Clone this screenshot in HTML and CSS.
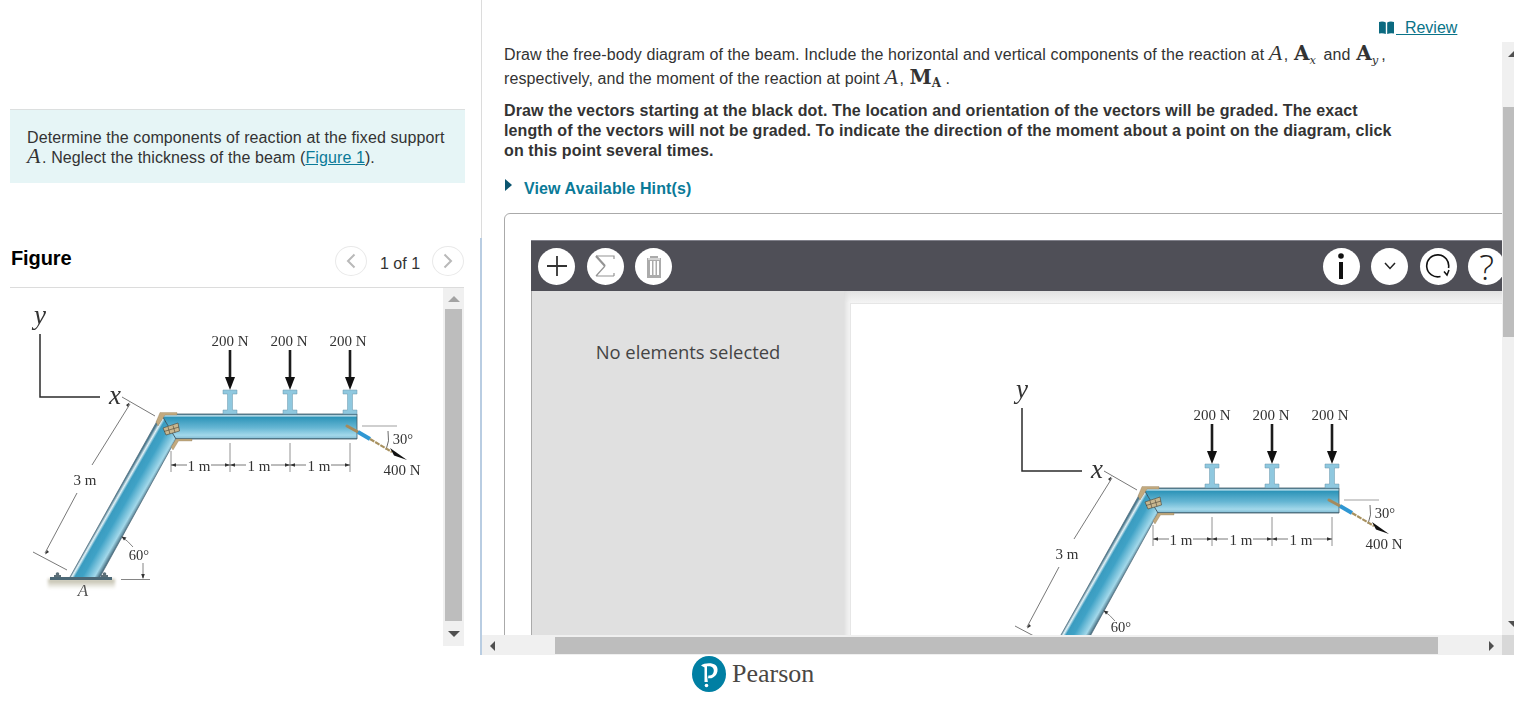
FILE: index.html
```html
<!DOCTYPE html>
<html lang="en">
<head>
<meta charset="utf-8">
<title>Free-body diagram</title>
<link rel="stylesheet" href="styles.css">
</head>
<body>
<div class="app">
  <div class="left">
    <div class="left-top">
      <div class="intro">Determine the components of reaction at the fixed support <span class="m-i">A</span>. Neglect the thickness of the beam (<a class="link" href="#">Figure 1</a>).</div>
    </div>
    <div class="left-bottom">
      <div class="fig-head">
        <div class="fig-title">Figure</div>
        <div class="pager">
          <span class="page-btn"><svg width="10" height="16" viewBox="0 0 10 16"><path d="M8.5 1.5L2 8l6.5 6.5" class="chev"/></svg></span>
          <span class="page-num">1 of 1</span>
          <span class="page-btn"><svg width="10" height="16" viewBox="0 0 10 16"><path d="M1.5 1.5L8 8l-6.5 6.5" class="chev"/></svg></span>
        </div>
      </div>
      <div class="fig-body">
        <div class="fig-view">
          <svg class="beam" width="400" height="300" viewBox="25 300 400 300">
            <defs>
              <linearGradient id="gH" x1="0" y1="0" x2="0" y2="1">
                <stop offset="0" stop-color="#3a6f88"/>
                <stop offset=".07" stop-color="#bfe2ee"/>
                <stop offset=".14" stop-color="#2f95b9"/>
                <stop offset=".55" stop-color="#66b6d3"/>
                <stop offset=".85" stop-color="#a3d8ea"/>
                <stop offset=".95" stop-color="#8cc4da"/>
                <stop offset="1" stop-color="#3a5f72"/>
              </linearGradient>
              <linearGradient id="gC" gradientUnits="userSpaceOnUse" x1="116" y1="495" x2="138.6" y2="508">
                <stop offset="0" stop-color="#4b7a90"/>
                <stop offset=".1" stop-color="#e4f3f8"/>
                <stop offset=".2" stop-color="#3b9cc0"/>
                <stop offset=".45" stop-color="#3fa2c6"/>
                <stop offset=".85" stop-color="#a2d8ea"/>
                <stop offset="1" stop-color="#4f7688"/>
              </linearGradient>
              <linearGradient id="gG" x1="0" y1="0" x2="0" y2="1">
                <stop offset="0" stop-color="#b9b6a0"/>
                <stop offset="1" stop-color="#ffffff"/>
              </linearGradient>
              <filter id="soft" x="-10%" y="-30%" width="120%" height="160%"><feGaussianBlur stdDeviation="1.6"/></filter>
              <g id="load">
                <rect x="-1.3" y="350" width="2.6" height="30" fill="#1c1c1c"/>
                <path d="M-5 377H5L0 390Z" fill="#111"/>
                <path d="M-7 390H7V394H2.5V410H7V414H-7V410H-2.5V394H-7Z" fill="#8fc8df" stroke="#6a96aa" stroke-width=".5"/>
              </g>
              <symbol id="beam-art" viewBox="25 300 400 300">
                <path d="M40 334V397H100" fill="none" stroke="#2b2b2b" stroke-width="1.5"/>
                <rect x="48" y="579" width="67" height="10" fill="url(#gG)" filter="url(#soft)"/>
                <path d="M122 397L155 416M33 552L67 570M130 404L92 465M77 493L45 553" fill="none" stroke="#555" stroke-width=".8"/>
                <path d="M128 407l1.5-4.5-3.5 2.5ZM47 550l-2 4.500 4-2.500Z" fill="#333"/>
                <path d="M70 577L161 414L176 439L100 577Z" fill="url(#gC)"/>
                <path d="M70 577L161 414M100 577L176 439" fill="none" stroke="#4a6675" stroke-width=".7"/>
                <path d="M161 414H357V439H176Z" fill="url(#gH)"/>
                <path d="M161 414H357V439H176" fill="none" stroke="#3f5a68" stroke-width=".8"/>
                <path d="M161 414L176 439" stroke="#27404c" stroke-width=".8"/>
                <path d="M160 412.500H177V415H165L158 426L156 422Z" fill="#c2a97e" stroke="#8a7350" stroke-width=".3"/>
                <path d="M176 439H192V441H178.500L173 450L171 447Z" fill="#c2a97e" stroke="#8a7350" stroke-width=".3"/>
                <path d="M163 428L178 423L179.500 431L166 435Z" fill="#c8b78f" stroke="#4a4336" stroke-width=".6"/>
                <path d="M168 427L170 434M173 425.500L175 432.500M164 431.500L179 427" stroke="#4a4336" stroke-width=".6" fill="none"/>
                <use href="#load" x="230"/>
                <use href="#load" x="290"/>
                <use href="#load" x="350"/>
                <path d="M50 580H112V577H50Z" fill="#4c6876"/>
                <path d="M54 577h7v-2h-7ZM101 577h7v-2h-7Z" fill="#5c6f78"/>
                <circle cx="57.500" cy="574" r="1.800" fill="#5c6f78"/>
                <circle cx="104.500" cy="574" r="1.800" fill="#5c6f78"/>
                <path d="M171 451V472M230 443V472M290 443V472M350 443V472" stroke="#777" stroke-width=".8" fill="none"/>
                <path d="M171 465H187M211 465H230M230 465H246M271 465H290M290 465H306M331 465H350" stroke="#555" stroke-width=".8" fill="none"/>
                <path d="M171 465l5-1.800v3.600ZM230 465l-5-1.800v3.600ZM230 465l5-1.800v3.600ZM290 465l-5-1.800v3.600ZM290 465l5-1.800v3.600ZM350 465l-5-1.800v3.600Z" fill="#333"/>
                <path d="M362 426H397" stroke="#777" stroke-width=".7"/>
                <path d="M388 431Q390 441 386 450" fill="none" stroke="#444" stroke-width=".8"/>
                <path d="M122 537Q128 541 133 547M143 563V578M121 579.500H150" fill="none" stroke="#666" stroke-width=".8"/>
                <path d="M121.500 536.500l5 1-2.500 3ZM143 579l-1.800-5h3.600Z" fill="#333"/>
                <path d="M347 426L358 432" stroke="#a58a5c" stroke-width="3" stroke-linecap="round"/>
                <path d="M358 432L370 439" stroke="#2f97d3" stroke-width="4"/>
                <path d="M370 439L392 452" stroke="#a8915f" stroke-width="2.200" stroke-dasharray="5 1"/>
                <path d="M407 460L394 455.500L390 448Z" fill="#111"/>
              </symbol>
            </defs>
            <use href="#beam-art" x="25" y="300" width="400" height="300"/>
            <text class="t-ax" x="40" y="324">y</text>
            <text class="t-ax" x="115" y="404">x</text>
            <text class="t-l" x="230" y="346">200 N</text>
            <text class="t-l" x="289" y="346">200 N</text>
            <text class="t-l" x="348" y="346">200 N</text>
            <text class="t-l" x="199" y="471">1 m</text>
            <text class="t-l" x="259" y="471">1 m</text>
            <text class="t-l" x="319" y="471">1 m</text>
            <text class="t-l" x="85" y="485">3 m</text>
            <text class="t-l" x="402" y="475">400 N</text>
            <text class="t-s" x="403" y="444">30°</text>
            <text class="t-s" x="139" y="560">60°</text>
            <text class="t-a" x="83" y="596">A</text>
          </svg>
        </div>
        <div class="vbar">
          <div class="vbar-end vbar-top"><i class="tri tri-up"></i></div>
          <div class="vbar-thumb"></div>
          <div class="vbar-end"><i class="tri tri-down"></i></div>
        </div>
      </div>
    </div>
  </div>

  <div class="right">
    <div class="review-row">
      <svg class="book" width="15" height="13" viewBox="0 0 15 13"><path d="M0 1Q4 0 6.800 1.500V13Q4 11.800 0 12.500ZM15 1Q11 0 8.200 1.500V13Q11 11.800 15 12.500Z" fill="#0b6a80"/></svg>
      <a class="review" href="#">&nbsp;&nbsp;Review</a>
    </div>
    <div class="scroll-grid">
      <div class="scroller">
        <p class="lead">Draw the free-body diagram of the beam. Include the horizontal and vertical components of the reaction at <span class="m-i">A</span>, <span class="m-b">A</span><sub class="m-sub">x</sub> and <span class="m-b">A</span><sub class="m-sub">y</sub>,<br>respectively, and the moment of the reaction at point <span class="m-i">A</span>, <span class="m-b">M</span><sub class="m-subb">A</sub> .</p>
        <p class="strong">Draw the vectors starting at the black dot. The location and orientation of the vectors will be graded. The exact<br>length of the vectors will not be graded. To indicate the direction of the moment about a point on the diagram, click<br>on this point several times.</p>
        <div class="hint"><i class="hint-tri"></i><a class="hint-link" href="#">View Available Hint(s)</a></div>
        <div class="tool-box">
          <div class="toolbar">
            <span class="tool"><svg width="22" height="22" viewBox="0 0 22 22"><path d="M11 1V21M1 11H21" stroke="#333" stroke-width="1.800" fill="none"/></svg></span>
            <span class="tool"><svg width="24" height="24" viewBox="0 0 24 24"><path d="M3 2H21V5M21 22V19M3 22H21M3 22L12 12" stroke="#949494" stroke-width="1.200" fill="none"/><path d="M3 2L12 12" stroke="#949494" stroke-width="2.200" fill="none"/></svg></span>
            <span class="tool"><svg class="trash" width="16" height="24" viewBox="0 0 16 24"><path d="M4 3V1H12V3H15V23H1V3Z" fill="#ababab"/><path d="M4 6H6V20H4ZM7.500 6H9.500V20H7.500ZM11 6H13V20H11ZM2 3.500H14V4.500H2Z" fill="#ffffff"/></svg></span>
            <span class="tool-gap"></span>
            <span class="tool"><svg width="8" height="26" viewBox="0 0 8 26"><circle cx="4" cy="3" r="2.800" fill="#111"/><rect x="2" y="9" width="4" height="17" fill="#111"/></svg></span>
            <span class="tool"><svg width="12" height="8" viewBox="0 0 12 8"><path d="M1 1L6 6.500L11 1" stroke="#222" stroke-width="1.500" fill="none"/></svg></span>
            <span class="tool"><svg width="26" height="26" viewBox="0 0 26 26"><path d="M15.500 23.500A11 11 0 1 1 23.500 15" stroke="#111" stroke-width="1.600" fill="none"/><path d="M19 18.500L22 22L24 17" stroke="#111" stroke-width="1.500" fill="none"/></svg></span>
            <span class="tool tool-q">?</span>
          </div>
          <div class="work">
            <div class="side">No elements selected</div>
            <div class="canvas-wrap">
              <div class="canvas">
                <svg class="beam beam-big" width="400" height="300" viewBox="25 300 400 300">
                  <use href="#beam-art" x="25" y="300" width="400" height="300"/>
                  <text class="t-ax" x="40" y="324">y</text>
                  <text class="t-ax" x="115" y="404">x</text>
                  <text class="t-l" x="230" y="346">200 N</text>
                  <text class="t-l" x="289" y="346">200 N</text>
                  <text class="t-l" x="348" y="346">200 N</text>
                  <text class="t-l" x="199" y="471">1 m</text>
                  <text class="t-l" x="259" y="471">1 m</text>
                  <text class="t-l" x="319" y="471">1 m</text>
                  <text class="t-l" x="85" y="485">3 m</text>
                  <text class="t-l" x="402" y="475">400 N</text>
                  <text class="t-s" x="403" y="444">30°</text>
                  <text class="t-s" x="139" y="558">60°</text>
                </svg>
              </div>
            </div>
          </div>
        </div>
      </div>
      <div class="mainbar">
        <div class="mainbar-end mainbar-top"><i class="tri tri-up-dark tri-clip"></i></div>
        <div class="mainbar-thumb"></div>
        <div class="mainbar-end mainbar-bottom"><i class="tri tri-down tri-clip"></i></div>
      </div>
      <div class="hbar">
        <div class="hbar-start"><i class="tri tri-left"></i></div>
        <div class="hbar-thumb"></div>
        <div class="hbar-end"><i class="tri tri-right"></i></div>
      </div>
      <div class="corner"></div>
    </div>
    <div class="footer">
      <svg width="34" height="36" viewBox="0 0 34 36"><ellipse cx="17" cy="18" rx="17" ry="18" fill="#007fa3"/><path d="M9 9.500C12 7 20 6.500 23.500 9C27 12 26 19 21 21.500C19.500 22.300 18 22.500 16 22.200L16.400 19.500C19 20 21.500 18.500 21.800 15C22 11.500 19.500 9.800 15 10.300L15 19L15.800 26H12.500L12.500 11.500Z" fill="#fff"/><circle cx="14.500" cy="29.500" r="1.800" fill="#fff"/></svg>
      <span class="brand">Pearson</span>
    </div>
  </div>
</div>
</body>
</html>
```
FILE: styles.css
```css
* { box-sizing: border-box; }
html, body { margin: 0; padding: 0; background: #fff; }
body { font: 16px/20px "Liberation Sans", Arial, sans-serif; color: #333; overflow: hidden; letter-spacing: .1px; }
p { margin: 0; }
a { color: #0a7a98; }
i { display: block; }

.app { display: flex; width: 1527px; height: 706px; overflow: hidden; }

/* left column */
.left { width: 482px; flex: none; display: flex; flex-direction: column; }
.left-top { height: 238px; padding: 109px 0 0 10px; border-right: 1px solid #dcdcdc; }
.intro { width: 455px; height: 74px; padding: 18px 16px 0 17px; background: #e6f5f6; border-top: 1px solid #dcdfdf; }
.left-bottom { height: 417px; padding-left: 10px; padding-right: 16px; border-right: 2px solid #b9cde2; }
.fig-head { display: flex; justify-content: space-between; align-items: flex-start; height: 50px; padding-top: 8px; width: 454px; border-bottom: 1px solid #dcdcdc; }
.fig-title { font-size: 20px; line-height: 24px; font-weight: 700; color: #000; margin-left: 1px; letter-spacing: -.1px; }
.pager { display: flex; align-items: flex-start; gap: 13px; }
.page-btn { width: 32px; height: 30px; border: 1px solid #e9e9e9; border-radius: 50%; display: flex; align-items: center; justify-content: center; }
.chev { fill: none; stroke: #b9b9b9; stroke-width: 2; }
.page-num { margin-top: 8px; width: 39px; white-space: nowrap; letter-spacing: 0; }
.fig-body { display: flex; height: 358px; }
.fig-view { width: 433px; padding: 12px 0 0 15px; overflow: hidden; }
.beam { display: block; filter: blur(.35px); letter-spacing: 0; }
.t-ax { font: italic 27px "Liberation Serif", serif; fill: #333; text-anchor: middle; }
.t-l { font: 15px "Liberation Serif", serif; fill: #333; text-anchor: middle; }
.t-s { font: 14.500px "Liberation Serif", serif; fill: #333; text-anchor: middle; }
.t-a { font: italic 17px "Liberation Serif", serif; fill: #555; text-anchor: middle; }

.vbar { width: 21px; background: #f0f0f0; display: flex; flex-direction: column; align-items: center; }
.vbar-end { flex: 1; width: 100%; display: flex; align-items: center; justify-content: center; }
.vbar-top { flex: none; height: 21px; }
.vbar-thumb { width: 17px; height: 312px; flex: none; background: #bdbdbd; }

.tri { width: 0; height: 0; border-style: solid; border-color: transparent; }
.tri-up { border-width: 0 6px 6px; border-bottom-color: #a3a3a3; }
.tri-up-dark { border-width: 0 6px 6px; border-bottom-color: #505050; }
.tri-down { border-width: 6px 6px 0; border-top-color: #505050; }
.tri-left { border-width: 5px 5px 5px 0; border-right-color: #505050; }
.tri-right { border-width: 5px 0 5px 5px; border-left-color: #505050; }

/* right column */
.right { width: 1032px; flex: none; display: flex; flex-direction: column; }
.review-row { height: 42px; display: flex; align-items: flex-start; padding: 18px 0 0 897px; }
.book { margin-top: 3px; flex: none; }
.review { white-space: nowrap; color: #0a7388; margin-left: 2px; letter-spacing: 0; }
.scroll-grid { display: grid; grid-template-columns: 1020px 12px; grid-template-rows: 593px 20px; }
.scroller { overflow: hidden; padding: 1px 0 0 22px; }
.lead { line-height: 24px; white-space: nowrap; }
.strong { font-weight: 700; margin-top: 10px; white-space: nowrap; letter-spacing: .12px; }
.m-i { font: italic 22px/16px "Liberation Serif", serif; margin-right: 1.500px; }
.m-b { font: 700 20px/16px "DejaVu Serif", serif; margin-left: 1px; letter-spacing: 0; }
.m-sub { font: italic 11.500px/10px "DejaVu Serif", serif; vertical-align: -4px; margin-right: 3px; }
.m-subb { font: 700 12px/10px "DejaVu Serif", serif; vertical-align: -3px; letter-spacing: 0; }
.hint { display: flex; align-items: flex-start; margin-top: 18px; height: 20px; }
.hint-tri { border-style: solid; border-width: 6.500px 0 6.500px 7px; border-color: transparent transparent transparent #0b5570; width: 0; height: 0; margin: 0 0 0 1px; }
.hint-link { margin-left: 12px; font-weight: 700; text-decoration: none; color: #0a7a98; letter-spacing: .12px; }
.tool-box { margin-top: 14px; width: 1100px; height: 500px; padding: 26px 0 0 26px; border: 1px solid #aaa; border-radius: 6px 0 0 0; }
.toolbar { width: 980px; height: 51px; background: #4f4f57; border-top: 1px solid #80808a; display: flex; align-items: center; padding: 0 6px 0 7px; gap: 11.500px; }
.tool { width: 37px; height: 37px; flex: none; background: #fff; border-radius: 50%; display: flex; align-items: center; justify-content: center; }
.trash { margin-top: 1px; }
.tool-gap { flex: 1; }
.tool-q { font: 300 35px/37px "Open Sans", sans-serif; color: #222; letter-spacing: 0; }
.work { width: 980px; height: 400px; display: flex; border-left: 1px solid #aaa; background: #f2f2f2; }
.side { width: 312px; flex: none; background: #e0e0e0; padding-top: 49px; text-align: center; font: 18.400px/24px "Open Sans", sans-serif; color: #444; letter-spacing: 0; }
.canvas-wrap { flex: 1; padding: 12px 0 0 6px; background: linear-gradient(#e2e2e2, #f4f4f4 12px); box-shadow: inset 5px 0 5px -3px #dcdcdc; }
.canvas { height: 100%; background: #fff; border-top: 1px solid #e6e6e6; border-left: 1px solid #e6e6e6; padding: 70px 0 0 156px; }

.mainbar { background: #f0f0f0; display: flex; flex-direction: column; overflow: hidden; }
.mainbar-end { display: flex; justify-content: flex-end; }
.mainbar-top { height: 65px; padding-top: 9px; }
.mainbar-bottom { flex: 1; padding-top: 284px; }
.mainbar-thumb { height: 230px; margin-left: 1px; flex: none; background: #bdbdbd; }
.tri-clip { margin-right: -6px; }

.hbar { background: #f0f0f0; display: flex; align-items: center; padding-top: 1px; }
.hbar-start { width: 73px; padding-left: 8px; flex: none; }
.hbar-thumb { width: 883px; height: 17px; flex: none; background: #bdbdbd; }
.hbar-end { flex: 1; padding-left: 51px; }
.corner { background: #d8d8d8; }

.footer { height: 51px; display: flex; align-items: flex-start; padding: 1px 0 0 210px; gap: 6px; }
.brand { font: 26px/36px "Liberation Serif", serif; color: #4a4744; letter-spacing: 0; }
```
